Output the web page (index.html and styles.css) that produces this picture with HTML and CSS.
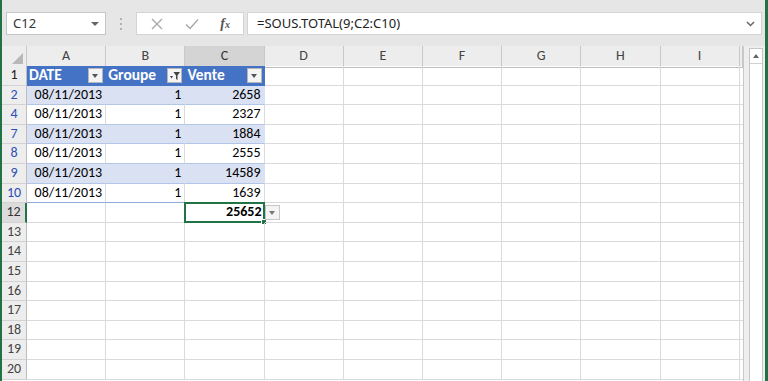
FILE: index.html
```html
<!DOCTYPE html>
<html lang="fr">
<head>
    <meta charset="UTF-8">
    <meta name="viewport" content="width=device-width, initial-scale=1.0">
    <title>SOUS.TOTAL</title>
    <link rel="stylesheet" href="styles.css">
</head>
<body>
<div class="window">
    <div class="formula-bar">
        <div class="name-box">C12<span class="caret"></span></div>
        <svg class="grip" width="4" height="14" viewBox="0 0 4 14"><circle cx="2" cy="2" r="1" fill="#a0a0a0"/><circle cx="2" cy="7" r="1" fill="#a0a0a0"/><circle cx="2" cy="12" r="1" fill="#a0a0a0"/></svg>
        <div class="fx-buttons">
            <svg width="12" height="12" viewBox="0 0 12 12"><path d="M1 1 L11 11 M11 1 L1 11" stroke="#a6a6a6" stroke-width="1.3" fill="none"/></svg>
            <svg width="14" height="12" viewBox="0 0 14 12"><path d="M1 6.5 L5 10.5 L13 1.5" stroke="#a6a6a6" stroke-width="1.3" fill="none"/></svg>
            <span class="fx">f<small>x</small></span>
        </div>
        <div class="formula">=SOUS.TOTAL(9;C2:C10)
            <svg class="chev" width="9" height="6" viewBox="0 0 9 6"><path d="M1 1 L4.5 4.5 L8 1" stroke="#666" stroke-width="1.5" fill="none"/></svg>
        </div>
    </div>

    <div class="sheet">
        <div class="grid">
            <div class="row head">
                <div class="corner"><span class="tri"></span></div>
                <div>A</div><div>B</div><div class="active">C</div><div>D</div><div>E</div><div>F</div><div>G</div><div>H</div><div>I</div><div></div>
            </div>
            <div class="row">
                <div class="rn dark">1</div>
                <div class="th">DATE<span class="flt"></span></div>
                <div class="th">Groupe<span class="flt on">
                    <svg width="12" height="12" viewBox="0 0 12 12"><path d="M1 6 L4 6 L2.5 8.5 Z" fill="#444"/><path d="M4.5 2 L11 2 L8.5 5.5 L8.5 10 L7 9 L7 5.5 Z" fill="#444"/></svg>
                </span></div>
                <div class="th">Vente<span class="flt"></span></div>
                <div></div><div></div><div></div><div></div><div></div><div></div><div></div>
            </div>
            <div class="row">
                <div class="rn blue">2</div>
                <div class="tb band">08/11/2013</div><div class="tb band">1</div><div class="tb band">2658</div>
                <div></div><div></div><div></div><div></div><div></div><div></div><div></div>
            </div>
            <div class="row">
                <div class="rn blue">4</div>
                <div class="tb">08/11/2013</div><div class="tb">1</div><div class="tb">2327</div>
                <div></div><div></div><div></div><div></div><div></div><div></div><div></div>
            </div>
            <div class="row">
                <div class="rn blue">7</div>
                <div class="tb band">08/11/2013</div><div class="tb band">1</div><div class="tb band">1884</div>
                <div></div><div></div><div></div><div></div><div></div><div></div><div></div>
            </div>
            <div class="row">
                <div class="rn blue">8</div>
                <div class="tb">08/11/2013</div><div class="tb">1</div><div class="tb">2555</div>
                <div></div><div></div><div></div><div></div><div></div><div></div><div></div>
            </div>
            <div class="row">
                <div class="rn blue">9</div>
                <div class="tb band">08/11/2013</div><div class="tb band">1</div><div class="tb band">14589</div>
                <div></div><div></div><div></div><div></div><div></div><div></div><div></div>
            </div>
            <div class="row">
                <div class="rn blue">10</div>
                <div class="tb last">08/11/2013</div><div class="tb last">1</div><div class="tb last">1639</div>
                <div></div><div></div><div></div><div></div><div></div><div></div><div></div>
            </div>
            <div class="row">
                <div class="rn active">12</div>
                <div></div><div></div>
                <div class="total">25652<span class="handle"></span><span class="drop"></span></div>
                <div></div><div></div><div></div><div></div><div></div><div></div><div></div>
            </div>
            <div class="row"><div class="rn">13</div><div></div><div></div><div></div><div></div><div></div><div></div><div></div><div></div><div></div><div></div></div>
            <div class="row"><div class="rn">14</div><div></div><div></div><div></div><div></div><div></div><div></div><div></div><div></div><div></div><div></div></div>
            <div class="row"><div class="rn">15</div><div></div><div></div><div></div><div></div><div></div><div></div><div></div><div></div><div></div><div></div></div>
            <div class="row"><div class="rn">16</div><div></div><div></div><div></div><div></div><div></div><div></div><div></div><div></div><div></div><div></div></div>
            <div class="row"><div class="rn">17</div><div></div><div></div><div></div><div></div><div></div><div></div><div></div><div></div><div></div><div></div></div>
            <div class="row"><div class="rn">18</div><div></div><div></div><div></div><div></div><div></div><div></div><div></div><div></div><div></div><div></div></div>
            <div class="row"><div class="rn">19</div><div></div><div></div><div></div><div></div><div></div><div></div><div></div><div></div><div></div><div></div></div>
            <div class="row"><div class="rn">20</div><div></div><div></div><div></div><div></div><div></div><div></div><div></div><div></div><div></div><div></div></div>
        </div>
        <div class="vscroll">
            <div class="up"></div>
        </div>
    </div>
</div>
</body>
</html>
```

FILE: styles.css
```css
* { margin: 0; padding: 0; box-sizing: border-box; }
body { width: 768px; height: 381px; overflow: hidden; background: #e6e6e6; font-family: Carlito, "Liberation Sans", Arial, sans-serif; font-size: 14px; color: #000; }

.window {
    height: 381px;
    border-left: 2px solid #217346;
    border-right: 3px solid #217346;
    display: flex;
    flex-direction: column;
}

/* formula bar */
.formula-bar {
    height: 46px;
    display: flex;
    align-items: center;
    padding: 1px 3px 0 4px;
    font-family: "Noto Sans", "Open Sans", sans-serif;
}
.name-box {
    width: 100px;
    height: 23px;
    background: #fff;
    border: 1px solid #c6c6c6;
    padding-left: 6px;
    font-size: 13px;
    line-height: 21px;
    color: #333;
    position: relative;
}
.caret {
    position: absolute;
    right: 6px;
    top: 9px;
    border-left: 4px solid transparent;
    border-right: 4px solid transparent;
    border-top: 4px solid #666;
}
.grip { margin: 0 13px 0 13px; }
.fx-buttons {
    width: 108px;
    height: 23px;
    background: #fff;
    border: 1px solid #d4d4d4;
    display: flex;
    align-items: center;
    justify-content: space-between;
    padding: 0 13px 0 14px;
}
.fx { font-family: "Liberation Serif", serif; font-style: italic; font-weight: bold; font-size: 14px; color: #555; }
.fx small { font-size: 10px; }
.formula {
    flex: 1;
    height: 23px;
    margin-left: 3px;
    background: #fff;
    border: 1px solid #d4d4d4;
    padding-left: 9px;
    font-size: 13px;
    line-height: 21px;
    color: #222;
    position: relative;
}
.chev { position: absolute; right: 6px; top: 8px; }

/* sheet */
.sheet {
    flex: 1;
    display: flex;
    background: #eeeeee;
    overflow: hidden;
}
.grid {
    width: 743px;
    background: #fff;
    border-right: 1px solid #c8c8c8;
    overflow: hidden;
}
.row {
    display: grid;
    grid-template-columns: 25px repeat(9, 79.2px) 1fr;
    height: 19.6px;
}
.row > div {
    border-right: 1px solid #dadada;
    border-bottom: 1px solid #dadada;
    line-height: 18.6px;
    text-align: right;
    padding-right: 3px;
    white-space: nowrap;
    overflow: visible;
    position: relative;
}

.row.head { height: 20px; background: #ededed; }
.row.head > div {
    text-align: center;
    padding: 0;
    color: #444;
    border-right-color: #c9c9c9;
    border-bottom-color: #bdbdbd;
    line-height: 20px;
}
.row.head > div.active {
    background: #d4d4d4;
    border-bottom: 2px solid #217346;
    color: #333;
}
.corner .tri {
    position: absolute;
    right: 3px;
    bottom: 3px;
    border-left: 11px solid transparent;
    border-bottom: 11px solid #b8b8b8;
}

.row > .rn {
    background: #ededed;
    text-align: center;
    padding: 0;
    color: #444;
    border-right-color: #bdbdbd;
    border-bottom-color: #d2d2d2;
}
.row > .rn.dark { color: #222; }
.row > .rn.blue { color: #2c4fb5; }
.row > .rn.active {
    background: #dcdcdc;
    border-right: 2px solid #217346;
    color: #333;
}

/* table */
.row > .th {
    background: #4472c4;
    color: #fff;
    font-weight: bold;
    font-size: 15.5px;
    text-align: left;
    padding-left: 2px;
    border-right-color: #4472c4;
    border-bottom-color: #4472c4;
}
.flt {
    position: absolute;
    right: 2px;
    top: 2px;
    width: 15px;
    height: 15px;
    background: #f4f4f4;
    border: 1px solid #b7b7b7;
}
.flt:not(.on)::after {
    content: "";
    position: absolute;
    left: 3px;
    top: 5px;
    border-left: 3.5px solid transparent;
    border-right: 3.5px solid transparent;
    border-top: 4px solid #555;
}
.flt svg { display: block; margin: 1px; }

.row > .tb { border-bottom-color: #b4c6e7; }
.row > .tb.band { background: #d9e1f2; border-right-color: #d9e1f2; }
.row > .tb.last { border-bottom-color: #8ea9db; }

.row > .total {
    font-weight: bold;
    border: 2px solid #217346;
    margin: -1px 0 0 -1px;
    width: calc(100% + 1px);
    height: calc(100% + 1px);
    line-height: 16px;
    padding-right: 1px;
}
.handle {
    position: absolute;
    right: -4px;
    bottom: -4px;
    width: 6px;
    height: 6px;
    background: #217346;
    border: 1px solid #fff;
}
.drop {
    position: absolute;
    left: calc(100% + 2px);
    top: 1px;
    width: 15px;
    height: 15px;
    background: #f4f4f4;
    border: 1px solid #c6c6c6;
}
.drop::after {
    content: "";
    position: absolute;
    left: 3px;
    top: 5px;
    border-left: 3.5px solid transparent;
    border-right: 3.5px solid transparent;
    border-top: 4px solid #777;
}

/* scrollbar */
.vscroll {
    width: 14px;
    margin: 2px 2px 0 5px;
    background: #fff;
    border: 1px solid #c6c6c6;
    border-bottom: none;
}
.up {
    height: 15px;
    border-bottom: 1px solid #d0d0d0;
    position: relative;
}
.up::after {
    content: "";
    position: absolute;
    left: 3px;
    top: 5px;
    border-left: 3.5px solid transparent;
    border-right: 3.5px solid transparent;
    border-bottom: 4px solid #666;
}
```
